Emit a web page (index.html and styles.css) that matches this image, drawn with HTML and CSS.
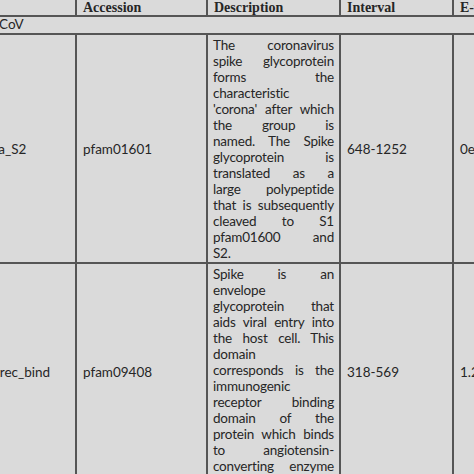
FILE: index.html
```html
<!DOCTYPE html>
<html lang="en">
<head>
<meta charset="utf-8">
<title>Pfam domains</title>
<link rel="stylesheet" href="styles.css">
</head>
<body>
<table class="domains">
  <colgroup>
    <col class="c-name">
    <col class="c-acc">
    <col class="c-desc">
    <col class="c-int">
    <col class="c-ev">
  </colgroup>
  <thead>
    <tr><th>Name</th><th>Accession</th><th>Description</th><th>Interval</th><th>E-value</th></tr>
  </thead>
  <tbody>
    <tr class="group"><td colspan="5">SARS-CoV</td></tr>
    <tr>
      <td>Corona_S2</td>
      <td>pfam01601</td>
      <td class="desc">The coronavirus<br>spike glycoprotein<br>forms the<br>characteristic<br>'corona' after which<br>the group is<br>named. The Spike<br>glycoprotein is<br>translated as a<br>large polypeptide<br>that is subsequently<br>cleaved to S1<br>pfam01600 and<br>S2.</td>
      <td>648-1252</td>
      <td>0e+00</td>
    </tr>
    <tr class="last">
      <td>Spike_rec_bind</td>
      <td>pfam09408</td>
      <td class="desc">Spike is an<br>envelope<br>glycoprotein that<br>aids viral entry into<br>the host cell. This<br>domain<br>corresponds is the<br>immunogenic<br>receptor binding<br>domain of the<br>protein which binds<br>to angiotensin-<br>converting enzyme</td>
      <td>318-569</td>
      <td>1.2e-101</td>
    </tr>
  </tbody>
</table>
</body>
</html>
```
FILE: styles.css
```css
html, body {
  margin: 0;
  padding: 0;
  background: #dadada;
  overflow: hidden;
}
body {
  width: 474px;
  height: 474px;
}
.domains {
  border-collapse: collapse;
  table-layout: fixed;
  width: 618px;
  margin: -5px 0 0 -46px;
  font-family: Lato, "Noto Sans", sans-serif;
  font-size: 13.5px;
  line-height: 16px;
  color: #262626;
}
.c-name { width: 121px; }
.c-acc { width: 131px; }
.c-desc { width: 133px; }
.c-int { width: 113px; }
.c-ev { width: 120px; }
.domains th,
.domains td {
  border: 2px solid #555;
  padding: 2px 6px 1px;
  text-align: left;
  vertical-align: middle;
  white-space: nowrap;
}
.domains th {
  font-family: "Liberation Serif", serif;
  font-size: 14px;
  line-height: 14px;
  font-weight: bold;
  padding: 4px 6px 0;
}
.group td {
  padding: 0 6px 1px;
  line-height: 15px;
}
.domains .desc {
  padding-left: 5px;
  padding-right: 5px;
  letter-spacing: -0.2px;
  text-align: justify;
  text-align-last: justify;
  white-space: normal;
}
.last .desc {
  padding-bottom: 4px;
}
```
